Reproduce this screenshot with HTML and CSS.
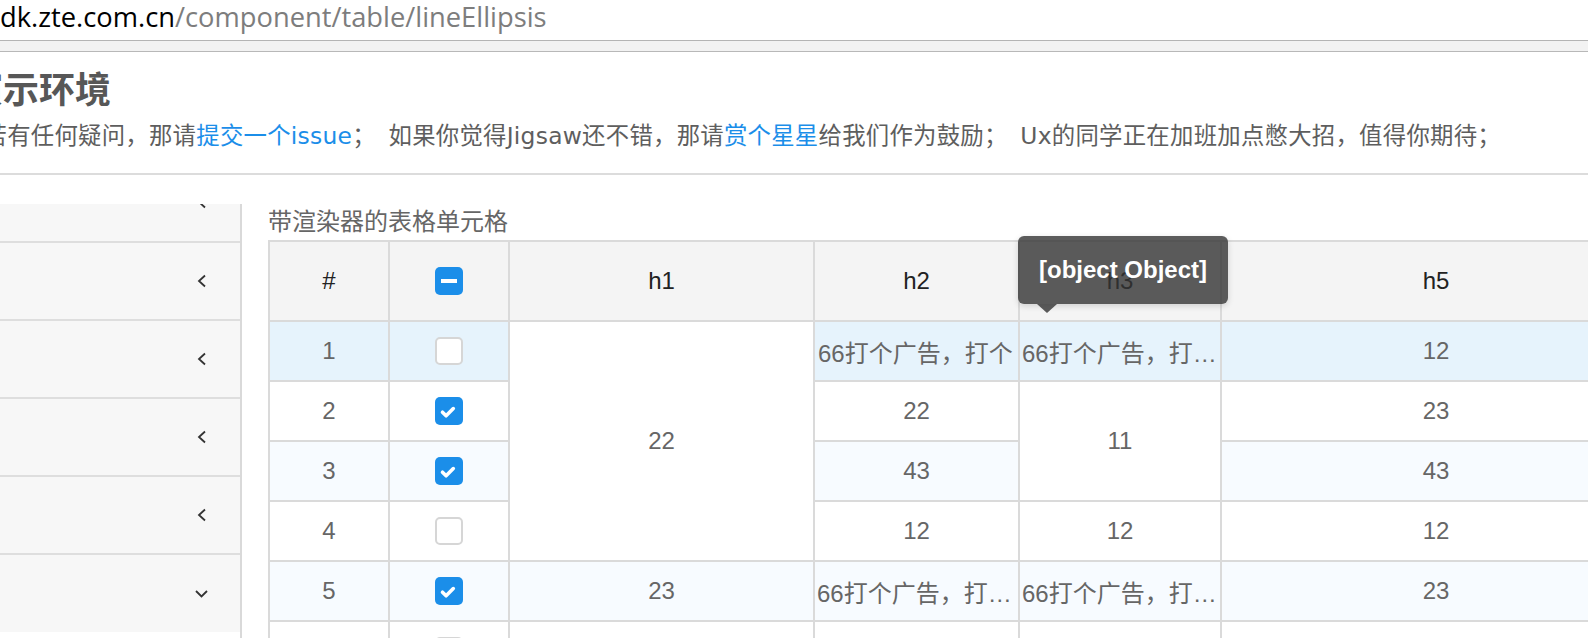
FILE: index.html
```html
<!DOCTYPE html>
<html lang="zh-CN">
<head>
    <meta charset="UTF-8">
    <meta name="viewport" content="width=device-width, initial-scale=1.0">
    <title>lineEllipsis</title>
    <link rel="stylesheet" href="styles.css">
</head>
<body>
    <div class="urlbar"><span class="url-host">dk.zte.com.cn</span><span class="url-path">/component/table/lineEllipsis</span></div>
    <div class="tabstrip"></div>

    <div class="intro">
        <h1 class="intro-title">演示环境</h1>
        <p class="intro-text">若有任何疑问，那请<a href="#">提交一个issue</a>； 如果你觉得Jigsaw还不错，那请<a href="#">赏个星星</a>给我们作为鼓励； Ux的同学正在加班加点憋大招，值得你期待；</p>
    </div>

    <div class="layout">
        <nav class="sidebar">
            <div class="nav-item nav-item-cut">
                <svg class="chevron" width="10" height="14" viewBox="0 0 10 14"><path d="M8 1.5L2 7l6 5.5"/></svg>
            </div>
            <div class="nav-item">
                <svg class="chevron" width="10" height="14" viewBox="0 0 10 14"><path d="M8 1.5L2 7l6 5.5"/></svg>
            </div>
            <div class="nav-item">
                <svg class="chevron" width="10" height="14" viewBox="0 0 10 14"><path d="M8 1.5L2 7l6 5.5"/></svg>
            </div>
            <div class="nav-item">
                <svg class="chevron" width="10" height="14" viewBox="0 0 10 14"><path d="M8 1.5L2 7l6 5.5"/></svg>
            </div>
            <div class="nav-item">
                <svg class="chevron" width="10" height="14" viewBox="0 0 10 14"><path d="M8 1.5L2 7l6 5.5"/></svg>
            </div>
            <div class="nav-item nav-item-open">
                <svg class="chevron" width="13" height="8" viewBox="0 0 13 8"><path d="M1 1l5.5 5.5L12 1"/></svg>
            </div>
        </nav>

        <main class="main">
            <div class="caption">带渲染器的表格单元格</div>
            <table class="grid">
                <thead>
                    <tr>
                        <th class="col-index">#</th>
                        <th class="col-check">
                            <svg class="checkbox" viewBox="0 0 28 28"><rect width="28" height="28" rx="5" fill="#1b8ee9"/><rect x="6" y="12" width="16" height="4" fill="#fff"/></svg>
                        </th>
                        <th class="col-h1">h1</th>
                        <th class="col-h2">h2</th>
                        <th class="col-h3">h3</th>
                        <th class="col-h5">h5</th>
                    </tr>
                </thead>
                <tbody>
                    <tr class="row-hover">
                        <td>1</td>
                        <td><svg class="checkbox" viewBox="0 0 28 28"><rect x="1" y="1" width="26" height="26" rx="4" fill="#fff" stroke="#d6d6d6" stroke-width="2"/></svg></td>
                        <td class="cell-merged" rowspan="4">22</td>
                        <td><div class="cell-clip">66打个广告，打个广告，打个广告</div></td>
                        <td><div class="cell-ellipsis">66打个广告，打个广告，打个广告</div></td>
                        <td>12</td>
                    </tr>
                    <tr>
                        <td>2</td>
                        <td><svg class="checkbox" viewBox="0 0 28 28"><rect width="28" height="28" rx="5" fill="#1b8ee9"/><path d="M7.5 15.2l3.6 3.6 7.2-7.2" fill="none" stroke="#fff" stroke-width="3.6" stroke-linecap="round" stroke-linejoin="round"/></svg></td>
                        <td>22</td>
                        <td class="cell-merged" rowspan="2">11</td>
                        <td>23</td>
                    </tr>
                    <tr class="row-stripe">
                        <td>3</td>
                        <td><svg class="checkbox" viewBox="0 0 28 28"><rect width="28" height="28" rx="5" fill="#1b8ee9"/><path d="M7.5 15.2l3.6 3.6 7.2-7.2" fill="none" stroke="#fff" stroke-width="3.6" stroke-linecap="round" stroke-linejoin="round"/></svg></td>
                        <td>43</td>
                        <td>43</td>
                    </tr>
                    <tr>
                        <td>4</td>
                        <td><svg class="checkbox" viewBox="0 0 28 28"><rect x="1" y="1" width="26" height="26" rx="4" fill="#fff" stroke="#d6d6d6" stroke-width="2"/></svg></td>
                        <td>12</td>
                        <td>12</td>
                        <td>12</td>
                    </tr>
                    <tr class="row-stripe">
                        <td>5</td>
                        <td><svg class="checkbox" viewBox="0 0 28 28"><rect width="28" height="28" rx="5" fill="#1b8ee9"/><path d="M7.5 15.2l3.6 3.6 7.2-7.2" fill="none" stroke="#fff" stroke-width="3.6" stroke-linecap="round" stroke-linejoin="round"/></svg></td>
                        <td>23</td>
                        <td><div class="cell-ellipsis">66打个广告，打个广告，打个广告</div></td>
                        <td><div class="cell-ellipsis">66打个广告，打个广告，打个广告</div></td>
                        <td>23</td>
                    </tr>
                    <tr>
                        <td>6</td>
                        <td><svg class="checkbox" viewBox="0 0 28 28"><rect x="1" y="1" width="26" height="26" rx="4" fill="#fff" stroke="#d6d6d6" stroke-width="2"/></svg></td>
                        <td>43</td>
                        <td>43</td>
                        <td>43</td>
                        <td>43</td>
                    </tr>
                </tbody>
            </table>

            <div class="tooltip">[object Object]</div>
        </main>
    </div>
</body>
</html>
```

FILE: styles.css
```css
:root {
    --line-color: #dadada;
    --text-color: #5e5e5e;
    --link-color: #1b8ee9;
    --font-family: "Liberation Sans", "Noto Sans CJK SC", sans-serif;
}

* {
    box-sizing: border-box;
    margin: 0;
    padding: 0;
}

html, body {
    overflow: hidden;
}

body {
    width: 1588px;
    height: 638px;
    background: #fff;
    color: var(--text-color);
    font-family: var(--font-family);
}

/* browser chrome */
.urlbar {
    height: 41px;
    border-bottom: 1px solid #b4b4b4;
    font-family: "Open Sans", sans-serif;
    font-size: 27.3px;
    line-height: 33px;
    white-space: nowrap;
}

.url-host {
    color: #000;
}

.url-path {
    color: #7d7d7d;
}

.tabstrip {
    height: 11px;
    background: #f2f2f2;
    border-bottom: 1px solid #b8b8b8;
}

/* page intro */
.intro {
    padding: 19px 0 21px;
    border-bottom: 2px solid #dcdcdc;
    white-space: nowrap;
}

.intro-title {
    margin-left: -33px;
    font-size: 36px;
    line-height: 40px;
    font-weight: bold;
    color: #575757;
}

.intro-text {
    margin: 9px 0 0 -16.5px;
    font-family: "DejaVu Sans", "Noto Sans CJK SC", sans-serif;
    font-size: 23.4px;
    line-height: 32px;
    letter-spacing: 0.25px;
    word-spacing: 5px;
}

.intro-text a {
    color: var(--link-color);
    text-decoration: none;
}

/* sidebar + demo */
.layout {
    display: flex;
    margin-top: 29px;
}

.sidebar {
    flex-shrink: 0;
    width: 242px;
    border-right: 2px solid #d9d9d9;
}

.nav-item {
    display: flex;
    align-items: center;
    justify-content: flex-end;
    height: 78px;
    padding-right: 33px;
    background: #f7f7f7;
    border-bottom: 2px solid #dedede;
}

.nav-item-cut {
    height: 39px;
    align-items: flex-start;
    overflow: hidden;
}

.nav-item-cut .chevron {
    margin-top: -9px;
}

.nav-item-open {
    height: 77px;
    border-bottom: none;
    padding-right: 32px;
}

.chevron {
    fill: none;
    stroke: #333;
    stroke-width: 1.8;
}

.main {
    position: relative;
    flex: 1;
    padding-left: 26px;
}

.caption {
    font-size: 24px;
    line-height: 36px;
    color: #666;
    white-space: nowrap;
}

.grid {
    width: 1384px;
    table-layout: fixed;
    border-collapse: separate;
    border-spacing: 0;
    border-top: 2px solid var(--line-color);
    border-left: 2px solid var(--line-color);
    font-size: 24px;
}

.grid th, .grid td {
    padding: 0 2px;
    border-right: 2px solid var(--line-color);
    border-bottom: 2px solid var(--line-color);
    text-align: center;
    vertical-align: middle;
}

.grid th {
    height: 80px;
    background: #f4f4f4;
    color: #222;
    font-weight: normal;
}

.grid td {
    height: 60px;
    color: #666;
}

.col-index { width: 120px; }
.col-check { width: 120px; }
.col-h1 { width: 305px; }
.col-h2 { width: 205px; }
.col-h3 { width: 202px; }
.col-h5 { width: 430px; }

.row-hover td {
    background: #e6f3fc;
}

.row-stripe td {
    background: #f7fbff;
}

.grid td.cell-merged {
    background: #fff;
}

.checkbox {
    display: block;
    width: 28px;
    height: 28px;
    margin: 0 auto;
}

.cell-clip, .cell-ellipsis {
    overflow: hidden;
    white-space: nowrap;
    text-align: left;
}

.cell-clip {
    margin: 0 3px 0 1px;
    text-overflow: clip;
}

.cell-ellipsis {
    text-overflow: ellipsis;
}

.tooltip {
    position: absolute;
    left: 776px;
    top: 32px;
    display: flex;
    align-items: center;
    justify-content: center;
    width: 210px;
    height: 68px;
    border-radius: 6px;
    background: rgba(51, 51, 51, 0.8);
    box-shadow: 0 2px 6px rgba(0, 0, 0, 0.15);
    color: #fff;
    font-size: 24px;
    font-weight: bold;
    white-space: nowrap;
}

.tooltip::after {
    content: "";
    position: absolute;
    top: 100%;
    left: 19px;
    border-top: 9px solid rgba(51, 51, 51, 0.8);
    border-left: 10.5px solid transparent;
    border-right: 10.5px solid transparent;
}
```
